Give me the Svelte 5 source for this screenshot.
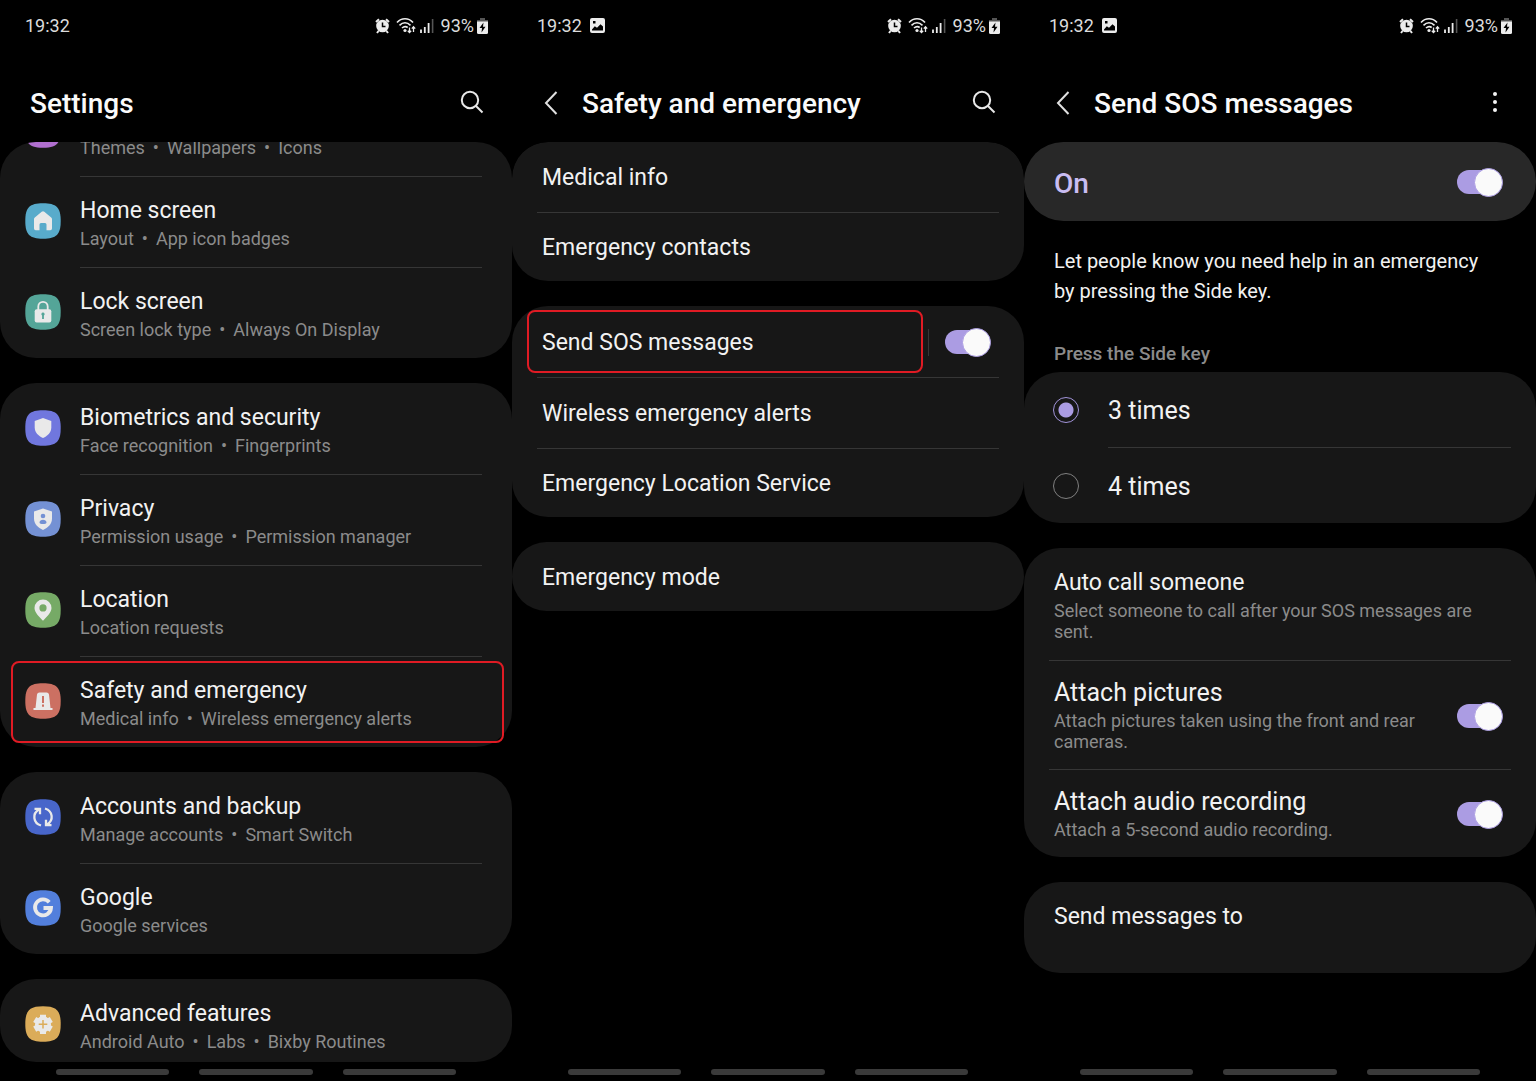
<script lang="ts">
interface Item {
  icon: string
  color: string
  title: string
  details: string[]
  marked?: boolean
}

const groups: Item[][] = [
  [
    { icon: 'themes', color: '#b06fcf', title: '', details: ['Themes', 'Wallpapers', 'Icons'] },
    { icon: 'home', color: '#58abcb', title: 'Home screen', details: ['Layout', 'App icon badges'] },
    { icon: 'lock', color: '#54a598', title: 'Lock screen', details: ['Screen lock type', 'Always On Display'] }
  ],
  [
    { icon: 'shield', color: '#7077de', title: 'Biometrics and security', details: ['Face recognition', 'Fingerprints'] },
    { icon: 'privacy', color: '#7491d4', title: 'Privacy', details: ['Permission usage', 'Permission manager'] },
    { icon: 'pin', color: '#76aa66', title: 'Location', details: ['Location requests'] },
    { icon: 'siren', color: '#cc7062', title: 'Safety and emergency', details: ['Medical info', 'Wireless emergency alerts'], marked: true }
  ],
  [
    { icon: 'sync', color: '#4866ca', title: 'Accounts and backup', details: ['Manage accounts', 'Smart Switch'] },
    { icon: 'google', color: '#527fdc', title: 'Google', details: ['Google services'] }
  ],
  [
    { icon: 'gear', color: '#dbac59', title: 'Advanced features', details: ['Android Auto', 'Labs', 'Bixby Routines'] }
  ]
]

let sosRow = $state(true)
let sosOn = $state(true)
let presses = $state('3')
let pictures = $state(true)
let audio = $state(true)
</script>

{#snippet statusBar(picture: boolean)}
  <div class="status">
    <span>19:32</span>
    {#if picture}
      <svg class="shot" width="15" height="15" viewBox="0 0 15 15">
        <path fill="#ececec" fill-rule="evenodd" d="M2 0h11a2 2 0 0 1 2 2v11a2 2 0 0 1-2 2H2a2 2 0 0 1-2-2V2a2 2 0 0 1 2-2zM2 11.600V12.500h11V8.500L10.500 6.300L7 9.700L4.800 8.300zM3 3v2.500h2.500V3z" />
      </svg>
    {/if}
    <div class="signals">
      <svg width="15" height="16" viewBox="0 0 15 16">
        <path d="M1 4L4 1.200M14 4L11 1.200M3.500 13L2 15M11.500 13L13 15" stroke="#ececec" stroke-width="2" fill="none" />
        <circle cx="7.500" cy="8" r="6.300" fill="#ececec" />
        <path d="M7.500 4.500V8.500H10.500" stroke="#000" stroke-width="1.500" fill="none" />
      </svg>
      <svg class="wifi" width="20" height="17" viewBox="0 0 20 17">
        <g fill="none" stroke="#ececec" stroke-width="1.600">
          <path d="M1 5.500C5.500 0.500 12.500 0.500 17 5.500M3.500 8.400C7 4.800 11 4.800 14.500 8.400M6 11C8 9.200 10 9.200 11.700 10.500" />
          <path d="M13.500 10.500V15.500M11.800 13.800L13.500 15.600L15.200 13.800M17.500 15V9.800M15.800 11.600L17.500 9.800L19.200 11.600" stroke-width="1.300" />
        </g>
        <circle cx="9" cy="13.500" r="1.600" fill="#ececec" />
      </svg>
      <svg class="bars" width="14" height="15" viewBox="0 0 14 15">
        <path d="M1 15V11.500M4.800 15V9M8.600 15V5" stroke="#ececec" stroke-width="1.800" />
        <path d="M12.600 15V1" stroke="#555" stroke-width="1.600" />
      </svg>
      <span>93%</span>
      <svg class="battery" width="11" height="16" viewBox="0 0 11 16">
        <path d="M3 0h5v2h3v2H0V2h3z" fill="#555" />
        <path d="M0 3.500h11V14.500a1.500 1.500 0 0 1-1.500 1.500h-8A1.500 1.500 0 0 1 0 14.500z" fill="#ececec" />
        <path d="M6.500 4.500L2.500 10H5L4.500 14.500L8.500 8.800H6z" fill="#000" />
      </svg>
    </div>
  </div>
{/snippet}

{#snippet searchButton()}
  <button class="tool" aria-label="Search">
    <svg width="24" height="24" viewBox="0 0 24 24" fill="none" stroke="#e8e8e8" stroke-width="2">
      <circle cx="10" cy="10" r="8.200" />
      <path d="M16 16L22.500 22.500" />
    </svg>
  </button>
{/snippet}

{#snippet backButton()}
  <button class="back" aria-label="Back">
    <svg width="14" height="24" viewBox="0 0 14 24" fill="none" stroke="#e0e0e0" stroke-width="2">
      <path d="M12.500 1L2 12L12.500 23" />
    </svg>
  </button>
{/snippet}

{#snippet icon(name: string, color: string)}
  <svg class="icon" width="36" height="36" viewBox="0 0 36 36" aria-hidden="true">
    <path fill={color} d="M18 0.300C31.500 0.300 35.700 4.500 35.700 18S31.500 35.700 18 35.700S0.300 31.500 0.300 18S4.500 0.300 18 0.300z" />
    {#if name == 'home'}
      <path fill="#e9e9e9" d="M16.700 8.700a2 2 0 0 1 2.600 0L26.200 14.500a2 2 0 0 1 .8 1.600V25.500a1.700 1.700 0 0 1-1.700 1.700H21.500V21.500a1.500 1.500 0 0 0-1.500-1.500h-4a1.500 1.500 0 0 0-1.500 1.500V27.200H10.700A1.700 1.700 0 0 1 9 25.500V16.100a2 2 0 0 1 .8-1.600z" />
    {:else if name == 'lock'}
      <path d="M13.300 16V12.500a4.700 4.700 0 0 1 9.400 0V16" fill="none" stroke="#e9e9e9" stroke-width="1.800" />
      <rect x="9.700" y="15.200" width="16.600" height="13.300" rx="2" fill="#e9e9e9" />
      <path fill={color} d="M18 18.500a1.700 1.700 0 0 1 .9 3.100V25h-1.800V21.600a1.700 1.700 0 0 1 .9-3.100z" />
    {:else if name == 'shield'}
      <path fill="#e9e9e9" d="M18 8L26.300 11V17.500C26.300 22.500 22.500 26 18 28C13.500 26 9.700 22.500 9.700 17.500V11z" />
    {:else if name == 'privacy'}
      <path fill="#e9e9e9" d="M18 7.500L27 10.500V17.500C27 23 23 26.700 18 29C13 26.700 9 23 9 17.500V10.500z" />
      <circle cx="18" cy="15" r="2.300" fill={color} />
      <path fill={color} d="M14.500 21.500C14.500 17.800 21.500 17.800 21.500 21.500C21.500 23.500 14.500 23.500 14.500 21.500z" />
    {:else if name == 'pin'}
      <path fill="#e9e9e9" fill-rule="evenodd" d="M18 7.500a8.500 8.500 0 0 1 8.500 8.500c0 5-5.500 9.300-8.500 12.700c-3-3.400-8.500-7.700-8.500-12.700A8.500 8.500 0 0 1 18 7.500zM18 12.300a3.600 3.600 0 1 0 0 7.200a3.600 3.600 0 0 0 0-7.200z" />
    {:else if name == 'siren'}
      <path fill="#e9e9e9" d="M14.500 9.500h7a2.500 2.500 0 0 1 2.500 2L25.500 25H27.500V27H8.500V25H10.500L12 11.500a2.500 2.500 0 0 1 2.500-2z" />
      <path d="M18 13V20M18 21.500V23.700" stroke={color} stroke-width="2" />
    {:else if name == 'sync'}
      <g fill="none" stroke="#e9e9e9" stroke-width="2.300">
        <path d="M16 26.500C8 24 7 14.500 14 10.500M20 9.500C28 12 29 21.500 22 25.500" />
        <path d="M9.500 9.800H15V15.300M26.500 26.200H21V20.700" />
      </g>
    {:else if name == 'google'}
      <path d="M24.200 12.300A8 8 0 1 0 26 18H18.500" fill="none" stroke="#e9e9e9" stroke-width="3.800" />
    {:else if name == 'gear'}
      <circle cx="18" cy="18.300" r="8" fill="#e9e9e9" />
      <path d="M18 8.700V27.900M9.700 13.500L26.300 23.100M9.700 23.100L26.300 13.500" stroke="#e9e9e9" stroke-width="6" />
      <path d="M18 14V22.600M13.700 18.300H22.300" stroke={color} stroke-width="1.500" />
    {/if}
  </svg>
{/snippet}

{#snippet navBar()}
  <div class="nav"><i></i><i></i><i></i></div>
{/snippet}

<div class="screens">
  <section class="phone">
    {@render statusBar(false)}
    <header class="top">
      <h1>Settings</h1>
      {@render searchButton()}
    </header>
    <div class="scroller scrolled">
      {#each groups as group}
        <div class="card">
          {#each group as item}
            <a class="item" class:marked={item.marked} href="#settings">
              {@render icon(item.icon, item.color)}
              <span class="text">
                <span class="title">{item.title}</span>
                <span class="sub">
                  {#each item.details as detail, i}
                    {#if i > 0}<span class="dot">•</span>{/if}<span>{detail}</span>
                  {/each}
                </span>
              </span>
            </a>
          {/each}
        </div>
      {/each}
    </div>
    {@render navBar()}
  </section>

  <section class="phone">
    {@render statusBar(true)}
    <header class="top">
      {@render backButton()}
      <h1>Safety and emergency</h1>
      {@render searchButton()}
    </header>
    <div class="scroller">
      <div class="card">
        <a class="line" href="#medical">Medical info</a>
        <a class="line" href="#contacts">Emergency contacts</a>
      </div>
      <div class="card">
        <div class="line split">
          <a class="sos" href="#sos">Send SOS messages</a>
          <input class="switch" type="checkbox" role="switch" aria-label="Send SOS messages" bind:checked={sosRow} />
        </div>
        <a class="line" href="#alerts">Wireless emergency alerts</a>
        <a class="line" href="#location">Emergency Location Service</a>
      </div>
      <div class="card">
        <a class="line" href="#mode">Emergency mode</a>
      </div>
    </div>
    {@render navBar()}
  </section>

  <section class="phone">
    {@render statusBar(true)}
    <header class="top">
      {@render backButton()}
      <h1>Send SOS messages</h1>
      <button class="tool more" aria-label="More options">
        <svg width="6" height="22" viewBox="0 0 6 22" fill="#f4f4f4">
          <circle cx="3" cy="3" r="2" />
          <circle cx="3" cy="11" r="2" />
          <circle cx="3" cy="19" r="2" />
        </svg>
      </button>
    </header>
    <div class="scroller">
      <label class="master">
        <span>On</span>
        <input class="switch" type="checkbox" role="switch" bind:checked={sosOn} />
      </label>
      <p class="intro">Let people know you need help in an emergency by pressing the Side key.</p>
      <h2>Press the Side key</h2>
      <div class="card">
        <label class="choice">
          <input type="radio" name="presses" value="3" bind:group={presses} />
          <span>3 times</span>
        </label>
        <label class="choice">
          <input type="radio" name="presses" value="4" bind:group={presses} />
          <span>4 times</span>
        </label>
      </div>
      <div class="card">
        <a class="option" href="#call">
          <span class="text">
            <span class="title">Auto call someone</span>
            <span class="sub">Select someone to call after your SOS messages are sent.</span>
          </span>
        </a>
        <label class="option">
          <span class="text">
            <span class="title">Attach pictures</span>
            <span class="sub">Attach pictures taken using the front and rear cameras.</span>
          </span>
          <input class="switch" type="checkbox" role="switch" bind:checked={pictures} />
        </label>
        <label class="option">
          <span class="text">
            <span class="title">Attach audio recording</span>
            <span class="sub">Attach a 5-second audio recording.</span>
          </span>
          <input class="switch" type="checkbox" role="switch" bind:checked={audio} />
        </label>
      </div>
      <div class="card">
        <a class="option recipients" href="#recipients"><span class="title">Send messages to</span></a>
      </div>
    </div>
    {@render navBar()}
  </section>
</div>

<style>
:global(body){background:#000;}

.screens{display:grid;grid-template-columns:repeat(3, minmax(0, 1fr));font-family:Roboto, sans-serif;color:#f2f2f2;background:#000;}
.phone{display:flex;flex-direction:column;height:100vh;min-width:0;}
.screens *{box-sizing:border-box;}
a{color:inherit;text-decoration:none;}
button{background:none;border:0;padding:0;display:flex;cursor:pointer;}
svg{display:block;flex:none;}

.status{display:flex;align-items:center;height:52px;padding:0 24px 1px 25px;font-size:18px;color:#dcdcdc;}
.shot{margin-left:8px;}
.signals{display:flex;align-items:center;margin-left:auto;}
.wifi{margin-left:6px;}
.bars{margin-left:4px;}
.signals span{margin:0 3px 0 7px;}

.top{display:flex;align-items:center;height:90px;padding:14px 28px 0 30px;}
h1{margin:0;font-size:28px;font-weight:500;line-height:36px;color:#fafafa;}
.back{width:40px;padding:0 0 3px 2px;}
.tool{margin-left:auto;padding-bottom:4px;}
.more{margin-right:10px;}

.scroller{flex:1;min-height:0;overflow:hidden;border-radius:36px;display:flex;flex-direction:column;gap:25px;}
.scrolled > .card:first-child{margin-top:-57px;}
.card{flex:none;background:#171717;border-radius:36px;}

.title{display:block;min-height:28px;font-size:23px;line-height:28px;}
.sub{display:block;margin-top:3px;font-size:18px;line-height:21px;color:#8b8b8b;}
.dot{margin:0 8px;}

.item{position:relative;display:flex;align-items:center;gap:19px;padding:0 30px 0 25px;}
.item .text{flex:1;padding:20px 0 18px;border-top:1px solid #363636;}
.item:first-child .text{border-color:transparent;}
.icon{margin-bottom:1px;}
.marked::after{content:'';position:absolute;inset:5px 8px 4px 11px;border:2px solid #e01b24;border-radius:8px;}

.line{display:flex;align-items:center;height:71px;margin:0 25px;padding:0 5px;border-top:1px solid #363636;font-size:23px;}
.line:first-child{height:70px;border-top-color:transparent;}
.line:last-child{height:69px;}
.line.split{height:71px;padding-right:9px;}
.sos{position:relative;flex:1;display:flex;align-items:center;height:27px;border-right:1px solid #363636;margin-right:16px;}
.sos::after{content:'';position:absolute;inset:-19px 5px -17px -15px;border:2px solid #e01b24;border-radius:8px;}

.switch{appearance:none;flex:none;position:relative;width:45px;height:24px;margin:0;border-radius:12px;background:#555;cursor:pointer;}
.switch::after{content:'';position:absolute;top:-2px;left:-1px;width:27px;height:27px;border:1px solid #777;border-radius:50%;background:#fafafa;}
.switch:checked{background:#ab9ce3;}
.switch:checked::after{left:auto;right:-1px;border-color:#ab9ce3;}

.master{flex:none;display:flex;align-items:center;justify-content:space-between;height:79px;padding:0 34px 0 30px;border-radius:40px;background:#282828;font-size:28px;font-weight:500;color:#c9bdf2;}
.master span{padding-top:3px;}
.intro{margin:0 36px 0 30px;font-size:20px;line-height:30px;}
h2{margin:11px 30px -19px;font-size:19px;font-weight:500;line-height:24px;color:#8b8b8b;}

.choice{display:flex;align-items:center;padding-left:29px;}
.choice span{flex:1;margin:0 25px 0 29px;padding:25px 0 22px;font-size:25px;line-height:28px;}
.choice:not(:last-child) span{border-bottom:1px solid #363636;}
.choice input{appearance:none;width:26px;height:26px;margin:0;border:1px solid #808080;border-radius:50%;}
.choice input:checked{border-color:#a294da;background:radial-gradient(circle, #ab9ce3 7px, transparent 8px);}

.option{display:flex;align-items:center;justify-content:space-between;margin:0 25px;padding:18px 9px 17px 5px;}
.option:first-child{padding-top:21px;}
.option:not(:last-child){border-bottom:1px solid #363636;}
.option:first-child:not(:last-child){padding-bottom:18px;}
label.option .title{font-size:25px;}
.option .switch{margin-left:24px;}
.option.recipients{padding-bottom:42px;}

.nav{flex:none;display:flex;gap:30px;height:19px;padding:7px 56px 6px;}
.nav i{flex:1;border-radius:3px;background:#3a3a3a;}
</style>
